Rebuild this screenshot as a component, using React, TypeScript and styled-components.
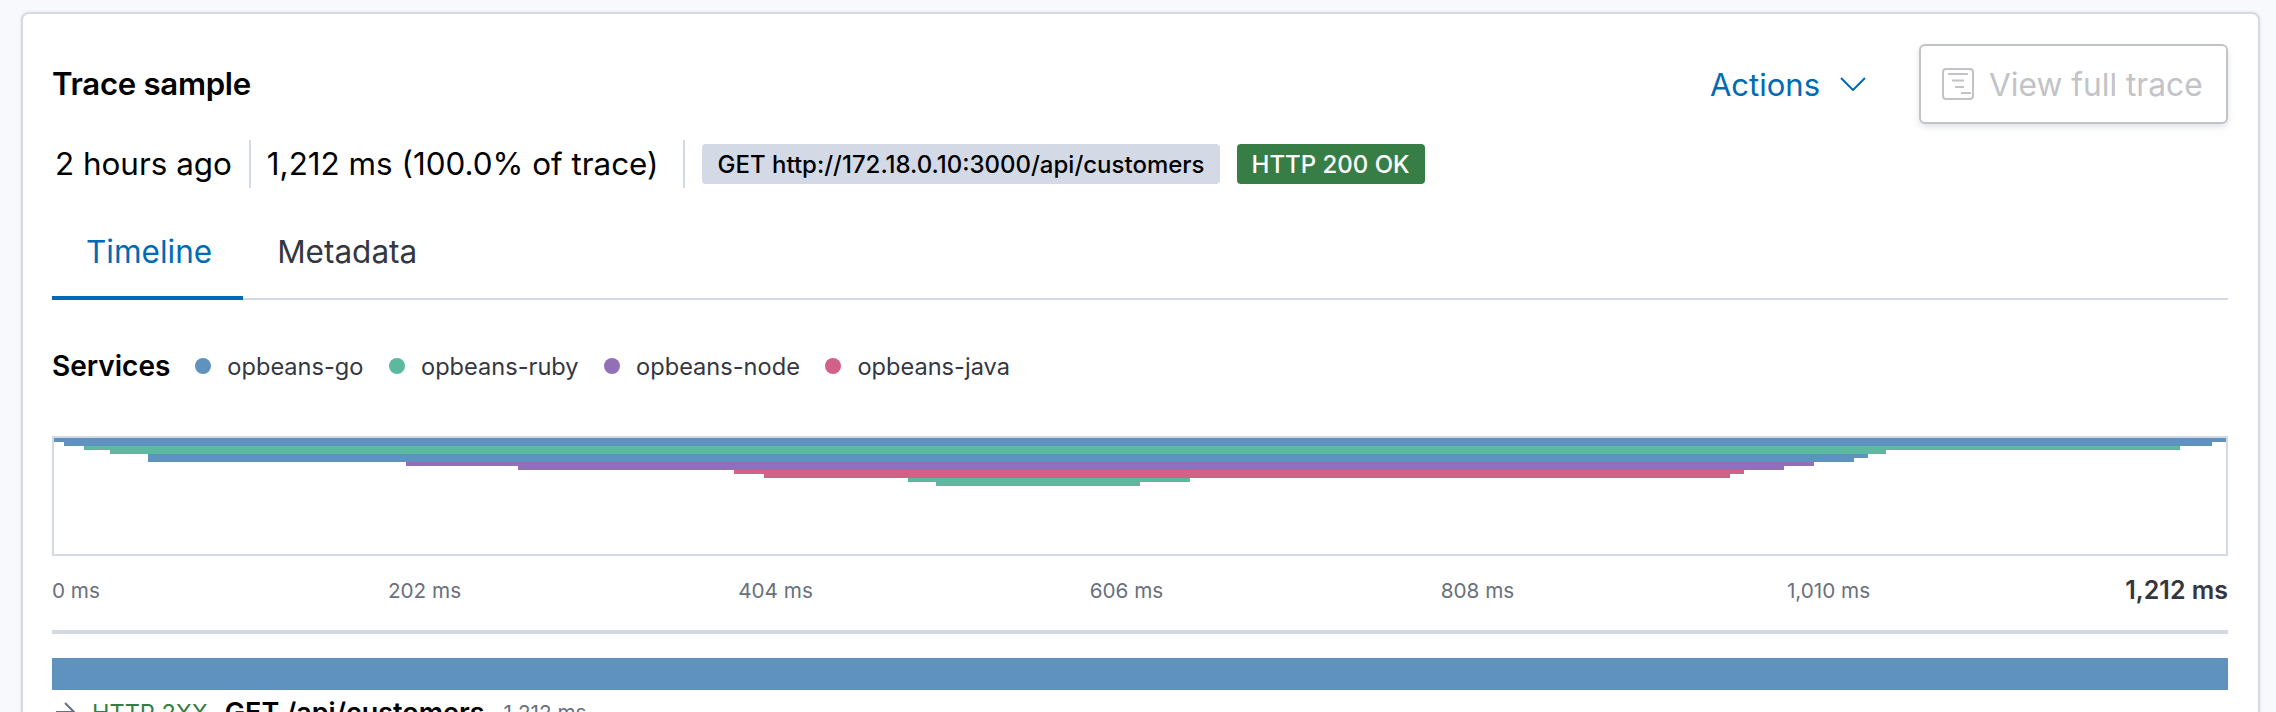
import React from "react";
import styled, { createGlobalStyle } from "styled-components";

const GlobalStyle = createGlobalStyle`
  html, body {
    margin: 0;
    height: 712px;
    overflow: hidden;
    background: #f7f9fc;
    font-family: Inter, "Noto Sans", sans-serif;
    color: #000;
  }
`;

const Card = styled.section`
  box-sizing: border-box;
  width: 2239px;
  height: 760px;
  margin: 12px 0 0 21px;
  padding: 30px 30px 0 29px;
  background: #fff;
  border: 2px solid #d3dae6;
  border-radius: 8px;
  box-shadow: 0 0 3px rgba(152, 162, 179, 0.25);
`;

const Header = styled.header`
  display: flex;
  align-items: center;
  height: 80px;
`;

const Title = styled.h2`
  flex: 1;
  margin: 0;
  font-size: 31.2px;
  font-weight: 600;
  letter-spacing: -0.3px;
`;

const ActionsButton = styled.button`
  display: flex;
  align-items: center;
  gap: 20px;
  margin-right: 53px;
  padding: 0;
  border: 0;
  background: none;
  color: #006bb4;
  font: 400 31px Inter, sans-serif;
`;

const TraceButton = styled.button`
  box-sizing: border-box;
  display: flex;
  align-items: center;
  gap: 15px;
  width: 309px;
  height: 80px;
  padding: 0 0 0 21px;
  border: 2px solid #c2c3c6;
  border-radius: 6px;
  background: #fff;
  box-shadow: 0 3px 6px rgba(152, 162, 179, 0.3);
  color: #c2c3c6;
  font: 400 31.7px Inter, sans-serif;
`;

const MetaRow = styled.div`
  display: flex;
  align-items: center;
  height: 48px;
  margin-top: 16px;
`;

const MetaItem = styled.span<{ $last?: boolean }>`
  display: flex;
  align-items: center;
  height: 48px;
  padding: 0 ${(p) => (p.$last ? "25px" : "17px")} 0 ${(p) => (p.$last ? "16px" : "3px")};
  border-right: 2px solid #d3dae6;
  font-size: 31.4px;
`;

const Badge = styled.span<{ $bg: string; $fg: string }>`
  display: flex;
  align-items: center;
  height: 40px;
  margin-left: 17px;
  padding: 0 15px;
  border-radius: 4px;
  background: ${(p) => p.$bg};
  color: ${(p) => p.$fg};
  font-size: 24px;
  font-weight: 500;
  white-space: nowrap;
`;

const Tabs = styled.nav`
  box-sizing: border-box;
  display: flex;
  height: 94px;
  margin-top: 18px;
  border-bottom: 2px solid #d3dae6;
`;

const Tab = styled.a<{ $active?: boolean }>`
  display: flex;
  align-items: center;
  box-sizing: border-box;
  height: 94px;
  padding: 0 31px 0 34px;
  border-bottom: 4px solid ${(p) => (p.$active ? "#006bb4" : "transparent")};
  color: ${(p) => (p.$active ? "#006bb4" : "#343741")};
  font-size: 31.5px;
`;

const Legend = styled.div`
  display: flex;
  align-items: center;
  height: 40px;
  margin-top: 46px;
`;

const LegendTitle = styled.strong`
  margin-right: 25px;
  font-size: 28px;
  font-weight: 600;
`;

const LegendItem = styled.span`
  display: flex;
  align-items: center;
  gap: 16px;
  margin-right: 25.5px;
  color: #343741;
  font-size: 23.6px;
`;

const Dot = styled.i<{ $color: string }>`
  width: 16px;
  height: 16px;
  border-radius: 50%;
  background: ${(p) => p.$color};
`;

const ChartFrame = styled.div`
  box-sizing: border-box;
  width: 2176px;
  height: 120px;
  margin-top: 50px;
  border: 2px solid #d3dae6;

  svg {
    display: block;
  }
`;

const Axis = styled.div`
  display: grid;
  grid-template-columns: 197px repeat(5, 351px) 1fr;
  align-items: center;
  width: 2176px;
  height: 34px;
  margin-top: 17px;
`;

const Tick = styled.span<{ $align: string }>`
  color: #69707d;
  font-size: 20.7px;
  text-align: ${(p) => p.$align};
`;

const LastTick = styled.span`
  color: #343741;
  font-size: 25px;
  font-weight: 600;
  text-align: right;
`;

const AxisRule = styled.hr`
  width: 2176px;
  height: 4px;
  margin: 23px 0 0;
  border: 0;
  background: #d3dae6;
`;

const SpanBar = styled.div`
  width: 2176px;
  height: 32px;
  margin-top: 24px;
  background: #6092c0;
`;

const SpanRow = styled.div`
  display: flex;
  align-items: center;
  height: 40px;
  margin-top: 2px;
  padding-left: 3px;
`;

const SpanStatus = styled.span`
  margin: 0 17px 0 17px;
  color: #377e46;
  font-size: 23.5px;
`;

const SpanName = styled.strong`
  margin-right: 19px;
  font-size: 27px;
  font-weight: 600;
`;

const SpanTime = styled.span`
  color: #69707d;
  font-size: 20.7px;
`;

const BLUE = "#6092c0";
const GREEN = "#5bb9a0";
const PURPLE = "#9170b8";
const PINK = "#d36086";

// x positions are page pixels, the chart starts at 54
const bars = [
  { from: 54, to: 2226, color: BLUE },
  { from: 64, to: 2212, color: BLUE },
  { from: 84, to: 2180, color: GREEN },
  { from: 110, to: 1886, color: GREEN },
  { from: 148, to: 1868, color: BLUE },
  { from: 148, to: 1854, color: BLUE },
  { from: 406, to: 1814, color: PURPLE },
  { from: 518, to: 1784, color: PURPLE },
  { from: 734, to: 1744, color: PINK },
  { from: 764, to: 1730, color: PINK },
  { from: 908, to: 1190, color: GREEN },
  { from: 936, to: 1140, color: GREEN },
];

const services = [
  { name: "opbeans-go", color: BLUE },
  { name: "opbeans-ruby", color: GREEN },
  { name: "opbeans-node", color: PURPLE },
  { name: "opbeans-java", color: PINK },
];

const ticks = ["0 ms", "202 ms", "404 ms", "606 ms", "808 ms", "1,010 ms"];

function TraceIcon() {
  return (
    <svg width="32" height="32" viewBox="0 0 32 32" fill="none" stroke="currentColor" strokeWidth="2">
      <rect x="1" y="1" width="30" height="30" rx="3" />
      <path d="M6 6h20M10 12.500h12M13 19h9M19 25h10" />
    </svg>
  );
}

function ChevronIcon() {
  return (
    <svg width="26" height="14" viewBox="0 0 26 14" fill="none" stroke="currentColor" strokeWidth="2">
      <path d="M1 1l12 12L25 1" />
    </svg>
  );
}

function ArrowIcon() {
  return (
    <svg width="20" height="24" viewBox="0 0 20 24" fill="none" stroke="#69707d" strokeWidth="2">
      <path d="M1 12h17M10 3l9 9-9 9" />
    </svg>
  );
}

function Timeline() {
  return (
    <ChartFrame>
      <svg width="2172" height="116" shapeRendering="crispEdges">
        {bars.map((bar, i) => (
          <rect key={i} x={bar.from - 54} y={i * 4} width={bar.to - bar.from} height="4" fill={bar.color} />
        ))}
      </svg>
    </ChartFrame>
  );
}

export default function App() {
  return (
    <>
      <GlobalStyle />
      <Card>
        <Header>
          <Title>Trace sample</Title>
          <ActionsButton>
            Actions
            <ChevronIcon />
          </ActionsButton>
          <TraceButton>
            <TraceIcon />
            View full trace
          </TraceButton>
        </Header>
        <MetaRow>
          <MetaItem>2 hours ago</MetaItem>
          <MetaItem $last>1,212 ms (100.0% of trace)</MetaItem>
          <Badge $bg="#d3dae6" $fg="#000">GET http://172.18.0.10:3000/api/customers</Badge>
          <Badge $bg="#377e46" $fg="#fff">HTTP 200 OK</Badge>
        </MetaRow>
        <Tabs>
          <Tab $active>Timeline</Tab>
          <Tab>Metadata</Tab>
        </Tabs>
        <Legend>
          <LegendTitle>Services</LegendTitle>
          {services.map((s) => (
            <LegendItem key={s.name}>
              <Dot $color={s.color} />
              {s.name}
            </LegendItem>
          ))}
        </Legend>
        <Timeline />
        <Axis>
          {ticks.map((t, i) => (
            <Tick key={t} $align={i === 0 ? "left" : "center"}>{t}</Tick>
          ))}
          <LastTick>1,212 ms</LastTick>
        </Axis>
        <AxisRule />
        <SpanBar />
        <SpanRow>
          <ArrowIcon />
          <SpanStatus>HTTP 2XX</SpanStatus>
          <SpanName>GET /api/customers</SpanName>
          <SpanTime>1,212 ms</SpanTime>
        </SpanRow>
      </Card>
    </>
  );
}
